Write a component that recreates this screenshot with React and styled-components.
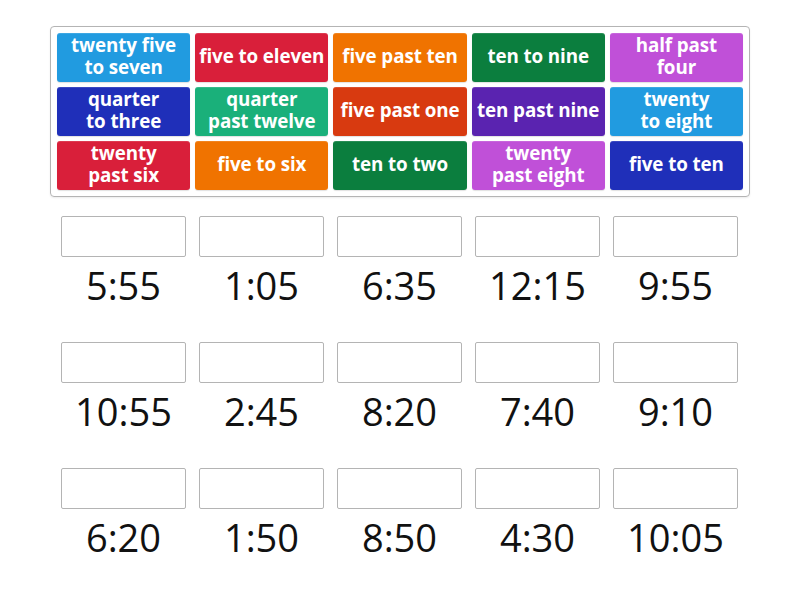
import React from "react";
import styled, { createGlobalStyle } from "styled-components";

const Global = createGlobalStyle`
  html, body { margin: 0; padding: 0; background: #ffffff; }
  body { font-family: "Open Sans", "Noto Sans", sans-serif; }
`;

const Page = styled.div`
  width: 700px;
  margin: 0 auto;
  padding-top: 26px;
`;

const Tray = styled.div`
  box-sizing: border-box;
  width: 700px;
  border: 1px solid #b4b4b4;
  border-radius: 4px;
  padding: 6px;
  display: grid;
  grid-template-columns: repeat(5, 1fr);
  column-gap: 5px;
  row-gap: 5px;
  box-shadow: 0 1px 2px rgba(0, 0, 0, 0.08);
`;

const Tile = styled.div`
  height: 49px;
  box-sizing: border-box;
  border-radius: 3px;
  background: ${(p) => p.$bg};
  box-shadow: inset 0 1px 0 rgba(255, 255, 255, 0.12), 0 1px 1px rgba(0, 0, 0, 0.12);
  color: #ffffff;
  font-weight: 700;
  font-size: 18.8px;
  line-height: 22px;
  text-align: center;
  display: flex;
  align-items: center;
  justify-content: center;
  padding: 0 1px 4px;
  white-space: pre-line;
  letter-spacing: -0.1px;
`;

const Answers = styled.div`
  margin-top: 19px;
  padding: 0 8px 0 7px;
  display: grid;
  grid-template-columns: repeat(5, 1fr);
  column-gap: 5px;
  row-gap: 33px;
`;

const Cell = styled.div`
  display: flex;
  flex-direction: column;
  align-items: center;
`;

const Slot = styled.div`
  box-sizing: border-box;
  width: 125px;
  height: 41px;
  border: 1px solid #b4b4b4;
  border-radius: 2px;
  background: #ffffff;
`;

const Time = styled.div`
  margin-top: 4px;
  font-size: 38px;
  line-height: 48px;
  color: #111111;
  font-weight: 400;
`;

const C = {
  sky: "#219be0",
  red: "#d91f3a",
  orange: "#f07300",
  green: "#0b7e3e",
  orchid: "#c050d8",
  navy: "#1f2fb9",
  teal: "#1ab07a",
  vermilion: "#d83a10",
  purple: "#5a23b0",
};

const tiles = [
  ["twenty five\nto seven", C.sky],
  ["five to eleven", C.red],
  ["five past ten", C.orange],
  ["ten to nine", C.green],
  ["half past\nfour", C.orchid],
  ["quarter\nto three", C.navy],
  ["quarter\npast twelve", C.teal],
  ["five past one", C.vermilion],
  ["ten past nine", C.purple],
  ["twenty\nto eight", C.sky],
  ["twenty\npast six", C.red],
  ["five to six", C.orange],
  ["ten to two", C.green],
  ["twenty\npast eight", C.orchid],
  ["five to ten", C.navy],
];

const times = [
  "5:55", "1:05", "6:35", "12:15", "9:55",
  "10:55", "2:45", "8:20", "7:40", "9:10",
  "6:20", "1:50", "8:50", "4:30", "10:05",
];

export default function App() {
  return (
    <>
      <Global />
      <Page>
        <Tray>
          {tiles.map(([t, bg]) => (
            <Tile key={t} $bg={bg}>{t}</Tile>
          ))}
        </Tray>
        <Answers>
          {times.map((t) => (
            <Cell key={t}>
              <Slot />
              <Time>{t}</Time>
            </Cell>
          ))}
        </Answers>
      </Page>
    </>
  );
}
